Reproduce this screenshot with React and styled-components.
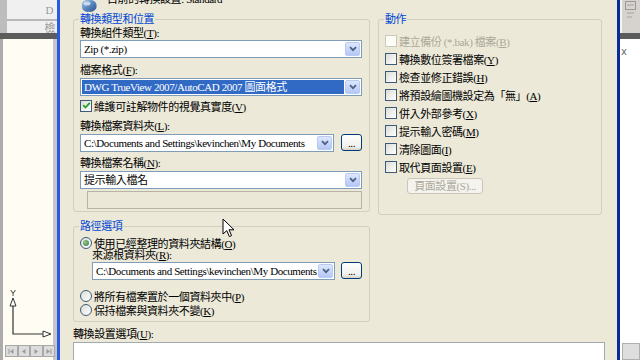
import React from "react";
import styled, { createGlobalStyle } from "styled-components";

const GlobalStyle = createGlobalStyle`
  * { box-sizing: border-box; }
  html, body { margin: 0; padding: 0; }
  body { width: 640px; height: 360px; overflow: hidden; background: #ece9d8; }
`;

const PATH = "C:\\Documents and Settings\\kevinchen\\My Documents";

const Screen = styled.div`
  position: relative;
  width: 640px;
  height: 360px;
  display: flex;
  overflow: hidden;
  font-family: "Liberation Serif", "Noto Sans CJK TC", serif;
  font-size: 11px;
  letter-spacing: -0.4px;
  color: #000;
`;

/* ---- AutoCAD window behind the dialog (left) ---- */
const Desktop = styled.div`
  width: 57px;
  flex: none;
  display: flex;
  flex-direction: column;
`;

const DeskList = styled.div`
  display: flex;
  flex-direction: column;
  background: #bdbdbd;
  padding-left: 7px;
`;

const DeskRow = styled.div`
  height: ${(p) => p.$h}px;
  background: #f0f0f0;
  border-bottom: ${(p) => (p.$line ? "2px solid #b8b8b8" : "none")};
  display: flex;
  align-items: center;
  justify-content: flex-end;
  padding-right: ${(p) => p.$pr}px;
  color: #9a9a9a;
  white-space: nowrap;
  overflow: hidden;
`;

const Band = styled.div`
  height: 6px;
  flex: none;
  background: #5c5c5c;
`;

const Canvas = styled.div`
  flex: 1;
  background: #fffcf3;
  border-left: 3px solid #ababab;
  border-right: 4px solid #c6c6c6;
  display: flex;
  flex-direction: column;
  justify-content: flex-end;
  padding-bottom: 3px;
`;

const NavBar = styled.div`
  display: flex;
  margin-left: 2px;
  width: 50px;
  height: 12px;
`;

const NavButton = styled.div`
  flex: 1;
  background: #dcdcdc;
  border: 1px solid #a8a8a8;
  display: flex;
  align-items: center;
  justify-content: center;
`;

/* ---- the dialog ---- */
const Dialog = styled.div`
  width: 563px;
  flex: none;
  border-left: 3px solid #2a5ae4;
  border-right: 3px solid #0a2c9a;
  background: #ece9d8;
  padding: 0 12px 0 13px;
  display: flex;
  flex-direction: column;
`;

const Header = styled.div`
  height: 12px;
  flex: none;
  overflow: hidden;
  display: flex;
  align-items: flex-end;
  padding-left: 7px;
`;

const Title = styled.div`
  margin-left: 9px;
  line-height: 13px;
  padding-bottom: 6px;
  white-space: nowrap;
`;

const Columns = styled.div`
  display: flex;
  gap: 8px;
  align-items: flex-start;
`;

const Column = styled.div`
  width: ${(p) => p.$w}px;
  flex: none;
  display: flex;
  flex-direction: column;
`;

const Group = styled.fieldset`
  margin: ${(p) => p.$mt || 0}px 0 0;
  padding: 0 7px ${(p) => p.$pb}px 6px;
  border: 1px solid #d0d0bf;
  border-radius: 3px;
  min-width: 0;
  display: flex;
  flex-direction: column;
  align-items: flex-start;
`;

const Legend = styled.legend`
  margin-left: -1px;
  padding: 0 1px;
  color: #0046d5;
  line-height: 14px;
`;

const Label = styled.div`
  margin-top: ${(p) => p.$mt || 0}px;
  line-height: 13px;
  white-space: nowrap;
`;

const Key = styled.span`
  text-decoration: underline;
`;

const Row = styled.div`
  display: flex;
  gap: ${(p) => p.$gap}px;
  margin-top: ${(p) => p.$mt || 0}px;
  align-items: flex-start;
`;

const Combo = styled.div`
  display: flex;
  width: ${(p) => p.$w}px;
  height: 18px;
  margin-top: ${(p) => p.$mt || 0}px;
  border: 1px solid #7f9db9;
  background: #fff;
  padding: 1px;
`;

const ComboValue = styled.div`
  flex: 1;
  min-width: 0;
  padding-left: 2px;
  line-height: 14px;
  white-space: nowrap;
  overflow: hidden;
  background: ${(p) => (p.$selected ? "#316ac5" : "transparent")};
  color: ${(p) => (p.$selected ? "#fff" : "#000")};
`;

const DropButton = styled.div`
  width: 15px;
  flex: none;
  margin-left: 1px;
  border: 1px solid #b9cbf3;
  border-radius: 2px;
  background: linear-gradient(#dde7fd, #b4c7f5);
  display: flex;
  align-items: center;
  justify-content: center;
`;

const Field = styled.div`
  width: ${(p) => p.$w}px;
  height: 18px;
  margin: ${(p) => p.$mt || 0}px 0 0 ${(p) => p.$ml || 0}px;
  border: 1px solid #b7b4a6;
  background: #ebe8d8;
`;

const Button = styled.div`
  width: ${(p) => p.$w}px;
  height: ${(p) => p.$h}px;
  margin: ${(p) => p.$mt || 0}px 0 0 ${(p) => p.$ml || 0}px;
  border: 1px solid ${(p) => (p.$disabled ? "#c9c7ba" : "#003c74")};
  border-radius: 3px;
  background: ${(p) =>
    p.$disabled ? "#f4f3ee" : "linear-gradient(#ffffff, #f0efe9 80%, #d6d0c5)"};
  color: ${(p) => (p.$disabled ? "#aca899" : "#000")};
  display: flex;
  align-items: center;
  justify-content: center;
  line-height: 12px;
  white-space: nowrap;
`;

const Option = styled.div`
  display: flex;
  align-items: center;
  gap: 2px;
  height: 13px;
  margin-top: ${(p) => p.$mt || 0}px;
  white-space: nowrap;
  color: ${(p) => (p.$disabled ? "#aca899" : "#000")};
`;

const Box = styled.span`
  width: 12px;
  height: 12px;
  flex: none;
  border: 1px solid ${(p) => (p.$disabled ? "#cac8bb" : "#3f5a78")};
  background: ${(p) =>
    p.$disabled ? "#fdfdf8" : "linear-gradient(135deg, #dcdcd6, #ffffff)"};
  display: flex;
  align-items: center;
  justify-content: center;
`;

const Radio = styled.span`
  width: 12px;
  height: 12px;
  flex: none;
  border-radius: 50%;
  border: 1px solid #3f5a78;
  background: linear-gradient(135deg, #dcdcd6, #ffffff);
  display: flex;
  align-items: center;
  justify-content: center;
  &::after {
    content: "";
    width: 6px;
    height: 6px;
    border-radius: 50%;
    background: ${(p) => (p.$on ? "radial-gradient(circle at 35% 35%, #8fc78f, #3a7d3a)" : "transparent")};
  }
`;

const Checks = styled.div`
  display: flex;
  flex-direction: column;
  gap: 5px;
  margin-top: 8px;
`;

const Indent = styled.div`
  margin-left: 12px;
  display: flex;
  flex-direction: column;
`;

const TextArea = styled.div`
  flex: none;
  height: 30px;
  margin-top: 1px;
  border: 1px solid #a3a9b1;
  background: #fff;
`;

/* ---- window behind the dialog (right) ---- */
const SideStrip = styled.div`
  width: 20px;
  flex: none;
  display: flex;
  flex-direction: column;
  background: #fff;
`;

const SideTop = styled.div`
  height: 33px;
  background: #d6d3ce;
  border-left: 2px solid #f4f4f4;
  padding: 1px 0 0 3px;
`;

const SideBody = styled.div`
  flex: 1;
  padding: 8px 0 0 1px;
  color: #6a6a6a;
  font-family: "DejaVu Sans", sans-serif;
  font-size: 10px;
  line-height: 10px;
`;

const SideFoot = styled.div`
  height: 17px;
  margin-left: 2px;
  background: #dedede;
  border: 1px solid #b0b0b0;
`;

const Cursor = styled.svg`
  position: absolute;
  left: 222px;
  top: 218px;
`;

const Chevron = () => (
  <svg width="8" height="6" viewBox="0 0 8 6">
    <path d="M1 1.2l3 3 3-3" fill="none" stroke="#4d6185" strokeWidth="1.8" />
  </svg>
);

const Tick = () => (
  <svg width="9" height="9" viewBox="0 0 9 9">
    <path d="M1.2 4.2l2.2 2.3L7.8 1.8" fill="none" stroke="#21a121" strokeWidth="1.8" />
  </svg>
);

const NavIcon = ({ dir, bar }) => (
  <svg width="7" height="7" viewBox="0 0 7 7">
    {dir === "left" ? (
      <path d="M5.5 1v5L2 3.5z" fill="#9a9a9a" />
    ) : (
      <path d="M1.5 1v5L5 3.5z" fill="#9a9a9a" />
    )}
    {bar && <rect x={dir === "left" ? 0.5 : 5.5} y="1" width="1" height="5" fill="#9a9a9a" />}
  </svg>
);

const Combobox = ({ w, mt, selected, children }) => (
  <Combo $w={w} $mt={mt}>
    <ComboValue $selected={selected}>{children}</ComboValue>
    <DropButton>
      <Chevron />
    </DropButton>
  </Combo>
);

const actions = [
  { text: "轉換數位簽署檔案", key: "Y" },
  { text: "檢查並修正錯誤", key: "H" },
  { text: "將預設繪圖機設定為「無」", key: "A" },
  { text: "併入外部參考", key: "X" },
  { text: "提示輸入密碼", key: "M" },
  { text: "清除圖面", key: "I" },
  { text: "取代頁面設置", key: "E" },
];

const App = () => {
  return (
    <Screen>
      <GlobalStyle />

      <Desktop>
        <DeskList>
          <DeskRow $h={21} $pr={4} $line>
            D
          </DeskRow>
          <DeskRow $h={12} $pr={2}>
            檢
          </DeskRow>
        </DeskList>
        <Band />
        <Canvas>
          <svg width="50" height="58" viewBox="0 0 50 58">
            <text x="7" y="9" fontSize="9" fontFamily="Liberation Sans, sans-serif" fill="#333">
              Y
            </text>
            <path d="M10 19V47H40" fill="none" stroke="#333" strokeWidth="1.2" />
            <path d="M10 11L7 19H13Z" fill="#fff" stroke="#333" strokeWidth="1" />
            <path d="M48 47L40 44V50Z" fill="#fff" stroke="#333" strokeWidth="1" />
          </svg>
          <NavBar>
            <NavButton>
              <NavIcon dir="left" bar />
            </NavButton>
            <NavButton>
              <NavIcon dir="left" />
            </NavButton>
            <NavButton>
              <NavIcon dir="right" />
            </NavButton>
            <NavButton>
              <NavIcon dir="right" bar />
            </NavButton>
          </NavBar>
        </Canvas>
      </Desktop>

      <Dialog>
        <Header>
          <svg width="18" height="14" viewBox="0 0 18 14" style={{ flex: "none", marginBottom: "-1px" }}>
            <defs>
              <linearGradient id="blob" x1="0" y1="0" x2="1" y2="1">
                <stop offset="0" stopColor="#a9c8e8" />
                <stop offset="0.5" stopColor="#5a86bf" />
                <stop offset="1" stopColor="#2b548c" />
              </linearGradient>
            </defs>
            <path d="M2 7C1 3 5 0.5 9 1.2C13 0.6 17 3 16.5 7C17 11 12.5 13.5 9 12.8C5 13.5 1.5 11 2 7Z" fill="url(#blob)" />
            <ellipse cx="7" cy="4.5" rx="3.5" ry="2" fill="#e4eef8" opacity="0.75" />
          </svg>
          <Title>目前的轉換設置: Standard</Title>
        </Header>

        <Columns>
          <Column $w={297}>
            <Group $pb={2}>
              <Legend>轉換類型和位置</Legend>
              <Label $mt={1}>
                轉換組件類型(<Key>T</Key>):
              </Label>
              <Combobox w={282}>Zip (*.zip)</Combobox>
              <Label $mt={6}>
                檔案格式(<Key>F</Key>):
              </Label>
              <Combobox w={282} mt={1} selected>
                DWG TrueView 2007/AutoCAD 2007 圖面格式
              </Combobox>
              <Option $mt={3}>
                <Box>
                  <Tick />
                </Box>
                <span>
                  維護可註解物件的視覺真實度(<Key>V</Key>)
                </span>
              </Option>
              <Label $mt={8}>
                轉換檔案資料夾(<Key>L</Key>):
              </Label>
              <Row $gap={7} $mt={1}>
                <Combobox w={254}>{PATH}</Combobox>
                <Button $w={21} $h={17}>
                  ...
                </Button>
              </Row>
              <Label $mt={5}>
                轉換檔案名稱(<Key>N</Key>):
              </Label>
              <Combobox w={282} mt={1}>
                提示輸入檔名
              </Combobox>
              <Field $w={275} $mt={2} $ml={7} />
            </Group>

            <Group $mt={7} $pb={5}>
              <Legend>路徑選項</Legend>
              <Option $mt={3}>
                <Radio $on />
                <span>
                  使用已經整理的資料夾結構(<Key>O</Key>)
                </span>
              </Option>
              <Indent>
                <Label>
                  來源根資料夾(<Key>R</Key>):
                </Label>
                <Row $gap={6}>
                  <Combobox w={243}>{PATH}</Combobox>
                  <Button $w={21} $h={17}>
                    ...
                  </Button>
                </Row>
              </Indent>
              <Option $mt={9}>
                <Radio />
                <span>
                  將所有檔案置於一個資料夾中(<Key>P</Key>)
                </span>
              </Option>
              <Option $mt={1}>
                <Radio />
                <span>
                  保持檔案與資料夾不變(<Key>K</Key>)
                </span>
              </Option>
            </Group>
          </Column>

          <Column $w={224}>
            <Group $pb={20}>
              <Legend>動作</Legend>
              <Checks>
                <Option $disabled>
                  <Box $disabled />
                  <span>
                    建立備份 (*.bak) 檔案(<Key>B</Key>)
                  </span>
                </Option>
                {actions.map((a) => (
                  <Option key={a.key}>
                    <Box />
                    <span>
                      {a.text}(<Key>{a.key}</Key>)
                    </span>
                  </Option>
                ))}
              </Checks>
              <Button $w={76} $h={16} $mt={5} $ml={22} $disabled>
                頁面設置(S)...
              </Button>
            </Group>
          </Column>
        </Columns>

        <Label $mt={6}>
          轉換設置選項(<Key>U</Key>):
        </Label>
        <TextArea />
      </Dialog>

      <SideStrip>
        <SideTop>
          <svg width="12" height="20" viewBox="0 0 12 20">
            <rect x="0.5" y="0.5" width="10" height="8" fill="none" stroke="#9a9a9a" />
            <path d="M2 4h7M2 12h7M2 16h5" stroke="#a5a5a5" />
          </svg>
        </SideTop>
        <Band />
        <SideBody>x</SideBody>
        <SideFoot />
      </SideStrip>

      <Cursor width="13" height="21" viewBox="0 0 13 21">
        <path d="M1 1V16L4.8 12.6L7.4 18.6L9.6 17.6L7 11.8H12Z" fill="#fff" stroke="#000" strokeWidth="1" strokeLinejoin="round" />
      </Cursor>
    </Screen>
  );
};

export default App;
